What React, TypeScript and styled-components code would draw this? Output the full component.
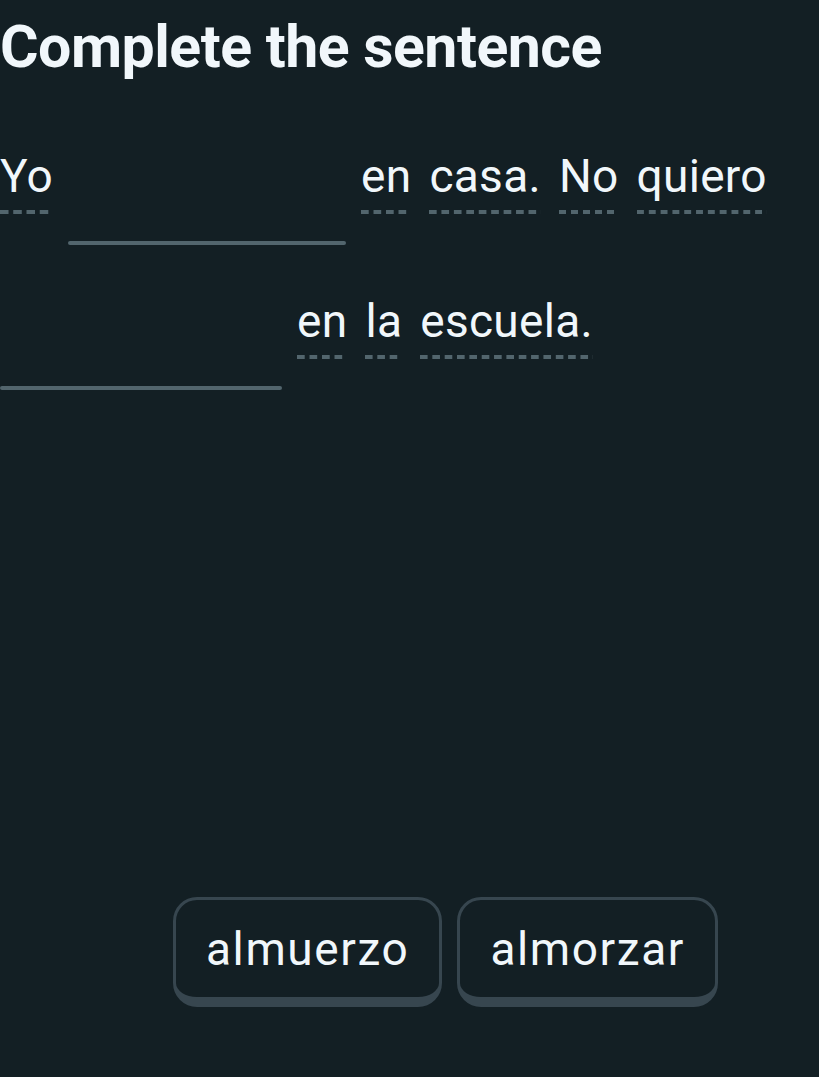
import React from "react";
import styled, { createGlobalStyle } from "styled-components";

const GlobalStyle = createGlobalStyle`
  html, body {
    margin: 0;
    padding: 0;
    background: #131f24;
  }
  body {
    font-family: Roboto, "Noto Sans", "Liberation Sans", sans-serif;
    color: #f1f7fb;
  }
`;

const Page = styled.main`
  min-height: 100vh;
  box-sizing: border-box;
  display: flex;
  flex-direction: column;
  padding-top: 12px;
  padding-bottom: 70px;
`;

const Title = styled.h1`
  margin: 0;
  font-family: Roboto, "Noto Sans", sans-serif;
  font-weight: 700;
  font-size: 59px;
  line-height: 70px;
  letter-spacing: -0.5px;
  color: #f1f7fb;
`;

const Sentence = styled.div`
  margin-top: 67px;
  display: flex;
  flex-wrap: wrap;
  align-items: flex-start;
  column-gap: 15px;
  row-gap: 49px;
  width: 100%;
`;

const Word = styled.span`
  display: block;
  font-size: 46px;
  line-height: 54px;
  font-weight: 400;
  letter-spacing: 0.3px;
  color: #f1f7fb;
  padding-bottom: 11px;
  background-image: linear-gradient(to right, #52656d 0 62%, transparent 62% 100%);
  background-size: 12px 4px;
  background-repeat: round no-repeat;
  background-position: left bottom;

  & + & {
    margin-left: 3px;
  }
`;

const Blank = styled.span<{ $width: number }>`
  display: flex;
  flex-direction: column;
  justify-content: flex-end;
  width: ${(p) => p.$width}px;
  height: 96px;
`;

const BlankLine = styled.span`
  display: block;
  height: 4px;
  border-radius: 2px;
  background: #52656d;
`;

const Answers = styled.div`
  margin-top: auto;
  display: flex;
  gap: 15px;
  padding-left: 173px;
`;

const Choice = styled.button`
  display: flex;
  align-items: center;
  justify-content: center;
  box-sizing: border-box;
  height: 110px;
  padding: 0 30px;
  background: #131f24;
  border: 3px solid #37464f;
  border-bottom-width: 10px;
  border-radius: 24px;
  font-family: Roboto, "Noto Sans", sans-serif;
  font-size: 46px;
  line-height: 54px;
  font-weight: 400;
  letter-spacing: 1.6px;
  color: #f1f7fb;
  cursor: pointer;
`;

type Token = { kind: "word"; text: string } | { kind: "blank"; width: number };

const tokens: Token[] = [
  { kind: "word", text: "Yo" },
  { kind: "blank", width: 278 },
  { kind: "word", text: "en" },
  { kind: "word", text: "casa." },
  { kind: "word", text: "No" },
  { kind: "word", text: "quiero" },
  { kind: "blank", width: 282 },
  { kind: "word", text: "en" },
  { kind: "word", text: "la" },
  { kind: "word", text: "escuela." },
];

export default function App() {
  return (
    <>
      <GlobalStyle />
      <Page>
        <Title>Complete the sentence</Title>
        <Sentence>
          {tokens.map((t, i) =>
            t.kind === "word" ? (
              <Word key={i}>{t.text}</Word>
            ) : (
              <Blank key={i} $width={t.width}>
                <BlankLine />
              </Blank>
            )
          )}
        </Sentence>
        <Answers>
          <Choice>almuerzo</Choice>
          <Choice>almorzar</Choice>
        </Answers>
      </Page>
    </>
  );
}
